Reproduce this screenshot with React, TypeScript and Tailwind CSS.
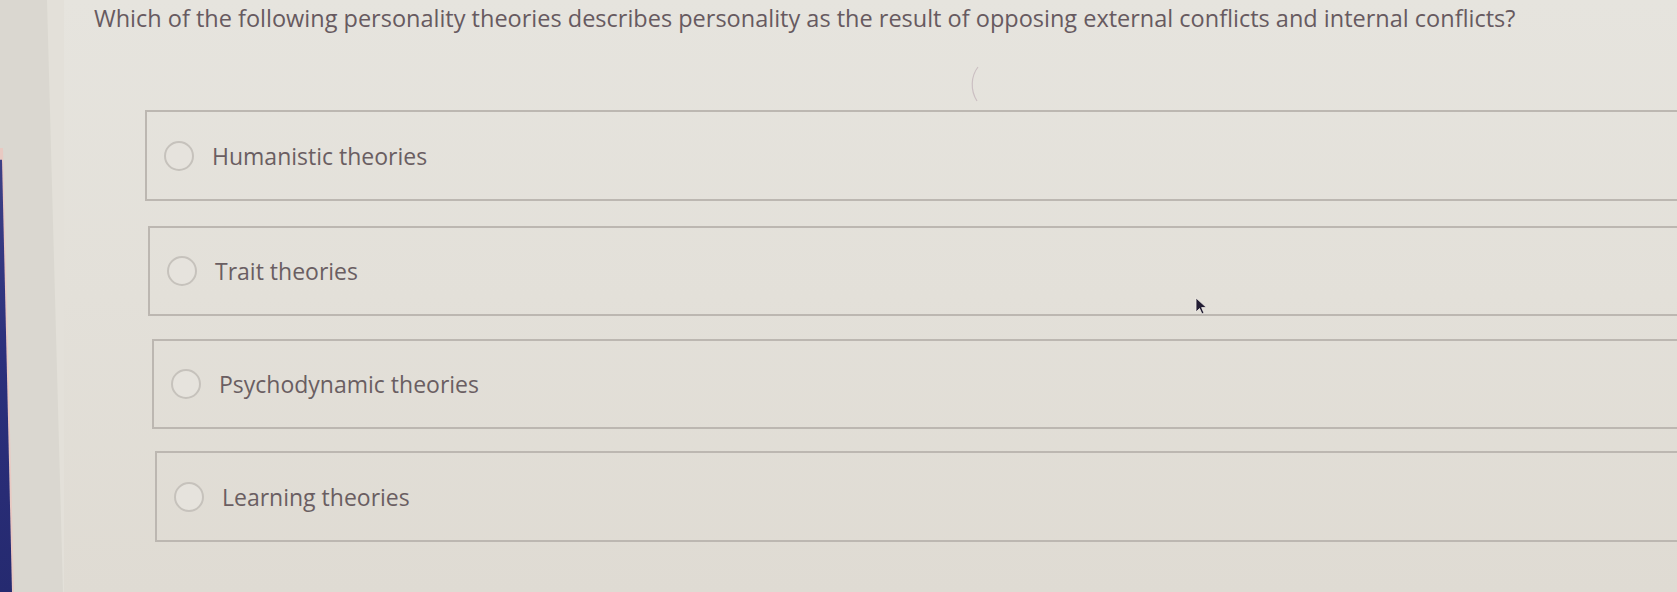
import React from "react";

type Opt = { label: string; ml: string; h: string; mt: string };

const options: Opt[] = [
  { label: "Humanistic theories", ml: "ml-[81px]", h: "h-[91px]", mt: "mt-[76px]" },
  { label: "Trait theories", ml: "ml-[84px]", h: "h-[90px]", mt: "mt-[25px]" },
  { label: "Psychodynamic theories", ml: "ml-[88px]", h: "h-[90px]", mt: "mt-[23px]" },
  { label: "Learning theories", ml: "ml-[91px]", h: "h-[91px]", mt: "mt-[22px]" },
];

function Option({ o }: { o: Opt }) {
  return (
    <div
      className={`${o.ml} ${o.h} ${o.mt} flex items-center border-y-2 border-l-2 border-[#bcb7b1] pl-[17px]`}
    >
      <span className="w-[30px] h-[30px] rounded-full border-2 border-[#c6c2bc] bg-[#e6e3dd] shrink-0" />
      <span className="ml-[18px] text-[23px] leading-[30px] font-medium text-[#6a5e62]">{o.label}</span>
    </div>
  );
}

export default function App() {
  return (
    <div
      className="relative flex w-[1677px] h-[592px] overflow-hidden bg-[#e3e0d9]"
      style={{ fontFamily: '"Open Sans", "Noto Sans", sans-serif' }}
    >
      <div className="relative w-[64px] h-full shrink-0">
        <div className="absolute inset-0 bg-[#dad7d0] [clip-path:polygon(0_0,47px_0,63px_100%,0_100%)]" />
        <div className="absolute inset-0 bg-[#e8c9c2] [clip-path:polygon(0_25%,3px_25%,14px_100%,0_100%)]" />
        <div className="absolute inset-0 bg-[linear-gradient(180deg,#4a4f8e,#2c2f7c_60%,#252a70)] [clip-path:polygon(0_27%,2px_27%,12px_100%,0_100%)]" />
      </div>
      <div className="flex-1 flex flex-col pt-[2px] bg-[linear-gradient(180deg,#e6e4de_0%,#e3e0d9_50%,#dfdbd3_100%)]">
        <p className="pl-[30px] text-[23.5px] leading-[32px] font-medium text-[#675a60] whitespace-nowrap">
          Which of the following personality theories describes personality as the result of opposing external conflicts and internal conflicts?
        </p>
        {options.map((o) => (
          <Option key={o.label} o={o} />
        ))}
      </div>
      <svg className="absolute left-[968px] top-[66px]" width="12" height="36" viewBox="0 0 12 36">
        <path d="M10 1 C3 10 2 24 9 35" stroke="#cbbfc2" strokeWidth="1.2" fill="none" />
      </svg>
      <svg className="absolute left-[1194px] top-[297px]" width="14" height="20" viewBox="0 0 14 20">
        <path d="M2 1 L2 15 L5.5 11.5 L8 17 L10 16 L7.6 10.6 L12.5 10.6 Z" fill="#221d33" stroke="#f2efe9" strokeWidth="0.8" />
      </svg>
    </div>
  );
}
